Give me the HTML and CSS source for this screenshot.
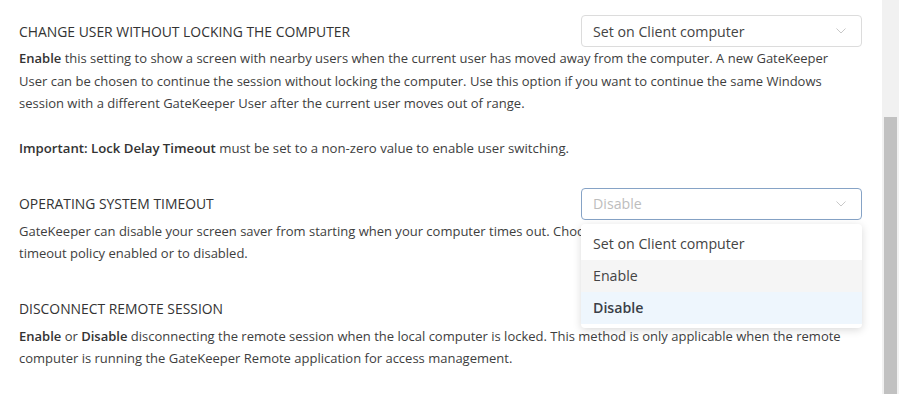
FILE: index.html
```html
<!DOCTYPE html>
<html>
<head>
<meta charset="utf-8">
<link rel="stylesheet" href="styles.css">
</head>
<body>
<div class="page">
  <main class="content">
    <section class="setting first">
      <div class="setting-head">
        <h3 class="title">CHANGE USER WITHOUT LOCKING THE COMPUTER</h3>
        <div class="select">
          <span class="value">Set on Client computer</span>
          <svg class="chev" width="12" height="8" viewBox="0 0 12 8"><path d="M1.5 1.5 L6 6 L10.5 1.5" fill="none" stroke="#c8c8c8" stroke-width="1"/></svg>
        </div>
      </div>
      <p class="desc"><b>Enable</b> this setting to show a screen with nearby users when the current user has moved away from the computer. A new GateKeeper<br>User can be chosen to continue the session without locking the computer. Use this option if you want to continue the same Windows<br>session with a different GateKeeper User after the current user moves out of range.</p>
      <p class="desc note"><b>Important: Lock Delay Timeout</b> must be set to a non-zero value to enable user switching.</p>
    </section>

    <section class="setting second">
      <div class="setting-head">
        <h3 class="title">OPERATING SYSTEM TIMEOUT</h3>
        <div class="select-wrap">
          <div class="select open">
            <span class="value placeholder">Disable</span>
            <svg class="chev" width="12" height="8" viewBox="0 0 12 8"><path d="M1.5 1.5 L6 6 L10.5 1.5" fill="none" stroke="#c8c8c8" stroke-width="1"/></svg>
          </div>
          <ul class="menu">
            <li class="opt">Set on Client computer</li>
            <li class="opt hover">Enable</li>
            <li class="opt selected">Disable</li>
          </ul>
        </div>
      </div>
      <p class="desc">GateKeeper can disable your screen saver from starting when your computer times out. Choose to leave the computer's operating system<br>timeout policy enabled or to disabled.</p>
    </section>

    <section class="setting third">
      <div class="setting-head">
        <h3 class="title">DISCONNECT REMOTE SESSION</h3>
        <div class="select"></div>
      </div>
      <p class="desc"><b>Enable</b> or <b>Disable</b> disconnecting the remote session when the local computer is locked. This method is only applicable when the remote<br>computer is running the GateKeeper Remote application for access management.</p>
    </section>
  </main>
  <div class="scrollbar">
    <div class="thumb"></div>
  </div>
</div>
</body>
</html>
```

FILE: styles.css
```css
* { box-sizing: border-box; }
html, body { margin: 0; padding: 0; }
body {
  width: 899px;
  height: 394px;
  overflow: hidden;
  background: #fff;
  font-family: "Segoe UI", "Open Sans", "Noto Sans", sans-serif;
  font-size: 13px;
  color: #3e3e3e;
}
.page {
  display: flex;
  height: 394px;
}
.content {
  flex: 1;
  padding: 15px 20px 0 19px;
}
.setting-head {
  display: flex;
  align-items: center;
  justify-content: space-between;
  height: 32px;
}
.title {
  margin: 0;
  font-size: 13.9px;
  font-weight: 400;
  color: #333;
}
.select-wrap { position: relative; }
.select {
  width: 281px;
  height: 32px;
  border: 1px solid #dcdcdc;
  border-radius: 4px;
  display: flex;
  align-items: center;
  justify-content: space-between;
  padding: 0 14px 0 11px;
  font-size: 14.2px;
  color: #444;
  background: #fff;
}
.select.open {
  border-color: #86a3c6;
}
.placeholder { color: #bdbdbd; }
.chev { display: block; }
.desc {
  margin: 0;
  line-height: 22.5px;
  white-space: nowrap;
}
.desc b { font-weight: 600; color: #333; }
.note { margin-top: 22.5px; font-size: 13.2px; }
.second { margin-top: 28px; }
.third { margin-top: 28px; }
.menu {
  position: absolute;
  left: 0;
  top: 36px;
  width: 281px;
  margin: 0;
  padding: 4px 0;
  list-style: none;
  background: #fff;
  border-radius: 4px;
  box-shadow: 0 2px 8px rgba(0,0,0,0.15);
  z-index: 5;
}
.opt {
  height: 32px;
  line-height: 32px;
  padding-left: 12px;
  font-size: 14.2px;
  color: #444;
}
.opt.hover { background: #f5f5f5; }
.opt.selected { background: #eef6fd; font-weight: 600; color: #3a3f47; }
.scrollbar {
  width: 17px;
  background: #f1f1f1;
  display: flex;
  flex-direction: column;
  padding: 117px 2px 0 2px;
}
.thumb {
  flex: 1;
  background: #c1c1c1;
}
```
